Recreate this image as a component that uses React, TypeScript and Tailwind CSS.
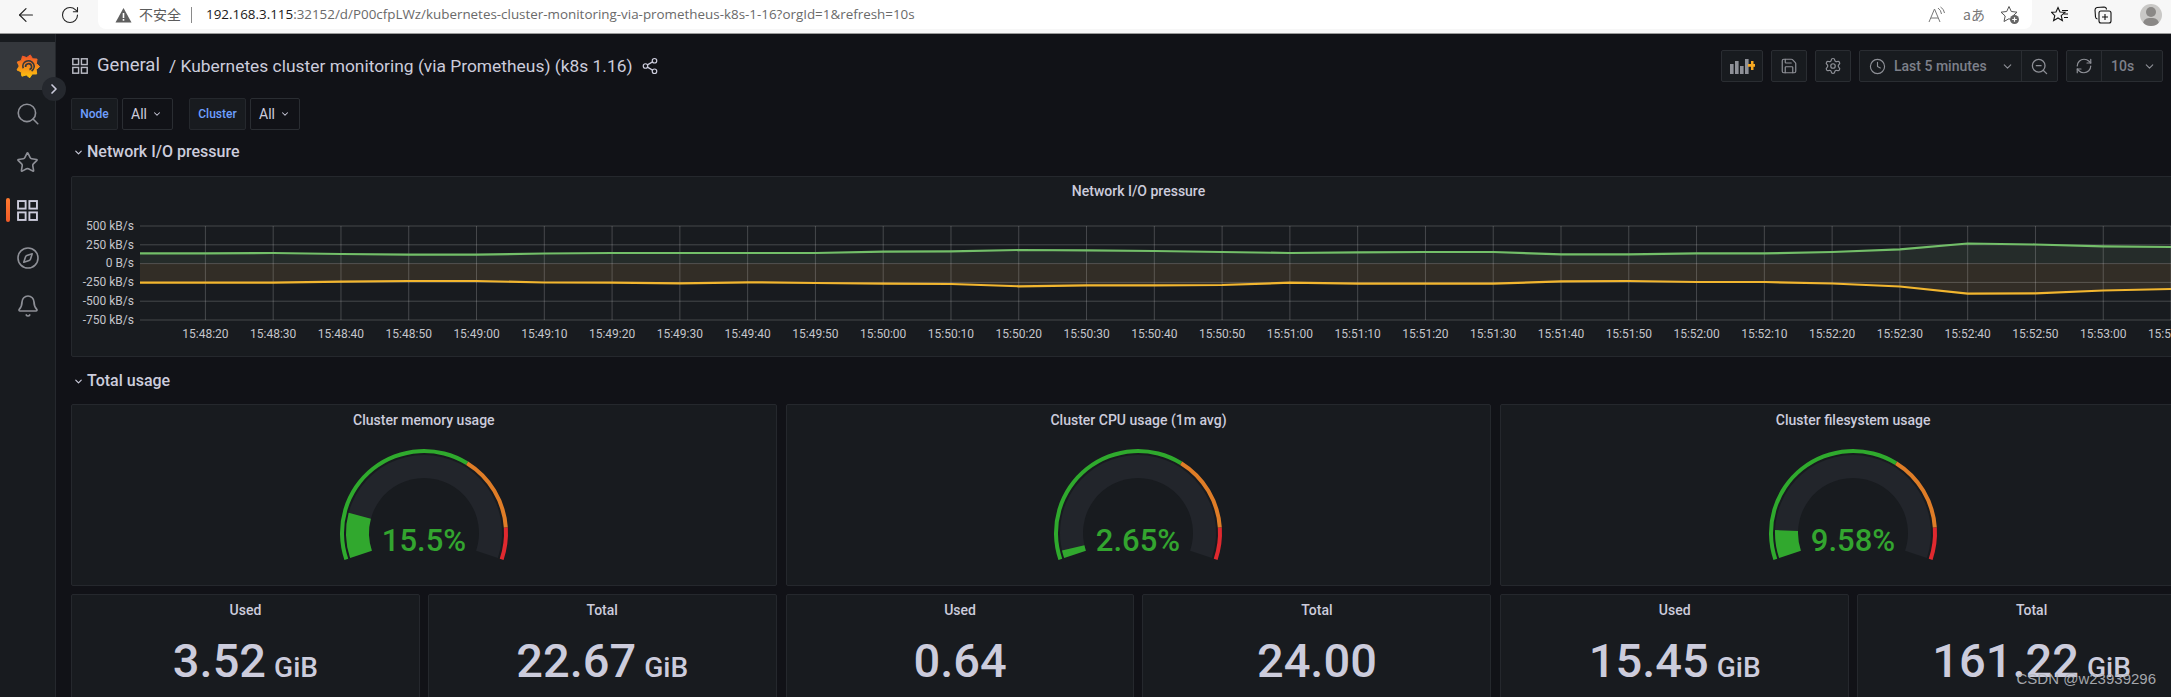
import React from "react";
import { ArrowLeft, RotateCw, Search, Star, Compass, Bell, Share2, ChevronDown, ChevronRight, Save, Settings, Clock, ZoomOut, RefreshCw } from "lucide-react";

const greenPts = [253.3, 253, 254, 254.7, 254.7, 253.5, 253, 253, 253, 253, 251.7, 251.3, 250, 250.3, 251, 252, 253, 252.3, 252, 252, 254.3, 254.3, 253.3, 253.4, 252, 249.3, 243.5, 244.5, 246.3, 247];
const yellowPts = [282.7, 282.7, 281.7, 281, 281, 282.5, 282.7, 283.3, 282.3, 283, 283.7, 284, 286.3, 285.3, 285.3, 285, 282.7, 283.7, 283.7, 283.7, 281.3, 281, 282, 282, 283.5, 286.5, 293.7, 293.3, 290.5, 289];
const tx = (i: number) => 204.4 + 67.78 * i;
const pad = (n: number) => String(n).padStart(2, "0");
const tickLabel = (i: number) => {
  const s = 15 * 3600 + 48 * 60 + 20 + i * 10;
  return `${pad(Math.floor(s / 3600))}:${pad(Math.floor((s % 3600) / 60))}:${pad(s % 60)}`;
};

function Chart() {
  const gridY = [226, 244.8, 263.6, 282.4, 301.2, 320];
  const labels = ["500 kB/s", "250 kB/s", "0 B/s", "-250 kB/s", "-500 kB/s", "-750 kB/s"];
  const line = (pts: number[]) => `M139 ${pts[0]} ` + pts.map((y, i) => `L${tx(i)} ${y}`).join(" ");
  const end = tx(29);
  return (
    <svg width="2135" height="150" viewBox="71 206 2135 150" className="block">
      <path d={`${line(greenPts)} L${end} 263.6 L139 263.6 Z`} fill="#252c2a" />
      <path d={`${line(yellowPts)} L${end} 263.6 L139 263.6 Z`} fill="#322d26" />
      {gridY.map((y) => (
        <line key={y} x1="139" x2="2206" y1={y} y2={y} stroke="#ffffff" strokeOpacity="0.2" />
      ))}
      {Array.from({ length: 30 }, (_, i) => (
        <line key={i} x1={tx(i)} x2={tx(i)} y1="226" y2="320" stroke="#ffffff" strokeOpacity="0.2" />
      ))}
      <path d={line(greenPts)} fill="none" stroke="#73bf69" strokeWidth="2.2" />
      <path d={line(yellowPts)} fill="none" stroke="#f2b62f" strokeWidth="2.2" />
      {labels.map((l, i) => (
        <text key={l} x="133" y={gridY[i] + 3.8} textAnchor="end" fontSize="12" fill="#c4c5cb">{l}</text>
      ))}
      {Array.from({ length: 30 }, (_, i) => (
        <text key={i} x={tx(i)} y="337.5" textAnchor="middle" fontSize="12" fill="#c4c5cb">{tickLabel(i)}</text>
      ))}
    </svg>
  );
}

const SWEEP = 217.4;
const START = 180 - 18.7;
function arc(cx: number, cy: number, r0: number, r1: number, p0: number, p1: number) {
  const a0 = ((START + p0 * SWEEP) * Math.PI) / 180;
  const a1 = ((START + p1 * SWEEP) * Math.PI) / 180;
  const pt = (r: number, a: number) => `${cx + r * Math.cos(a)} ${cy + r * Math.sin(a)}`;
  const large = (p1 - p0) * SWEEP > 180 ? 1 : 0;
  return `M${pt(r1, a0)} A${r1} ${r1} 0 ${large} 1 ${pt(r1, a1)} L${pt(r0, a1)} A${r0} ${r0} 0 ${large} 0 ${pt(r0, a0)} Z`;
}

function Gauge({ value, text }: { value: number; text: string }) {
  const cx = 95, cy = 90;
  return (
    <svg width="190" height="125" viewBox="0 0 190 125" className="block mt-[8px]">
      <path d={arc(cx, cy, 80, 84, 0, 0.646)} fill="#2faa2d" />
      <path d={arc(cx, cy, 80, 84, 0.646, 0.897)} fill="#df7d27" />
      <path d={arc(cx, cy, 80, 84, 0.897, 1)} fill="#e0292f" />
      <path d={arc(cx, cy, 55, 78, 0, 1)} fill="#22252b" />
      <path d={arc(cx, cy, 55, 78, 0, value)} fill="#31a82e" />
      <text x={cx} y={cy + 17.5} textAnchor="middle" fontSize="31" fontWeight="500" fill="#33a52f">{text}</text>
    </svg>
  );
}

const panel = "bg-[#181b1f] border border-[#25282d] rounded-[2px]";

function GaugePanel({ title, value, text }: { title: string; value: number; text: string }) {
  return (
    <div className={`${panel} h-[182px] flex flex-col items-center`}>
      <div className="h-[30px] leading-[30px] text-[14px] font-medium text-[#ccccdc]">{title}</div>
      <Gauge value={value} text={text} />
    </div>
  );
}

function Stat({ title, value, unit }: { title: string; value: string; unit?: string }) {
  return (
    <div className={`${panel} h-[140px] flex flex-col items-center`}>
      <div className="h-[30px] leading-[30px] text-[14px] font-medium text-[#ccccdc]">{title}</div>
      <div className="flex items-baseline mt-[9px] font-medium text-[#ccccdc]">
        <span className="text-[47px] leading-[54px]">{value}</span>
        {unit && <span className="text-[28px] ml-[8px]">{unit}</span>}
      </div>
    </div>
  );
}

function Apps({ className, color }: { className?: string; color: string }) {
  return (
    <svg viewBox="0 0 20 20" className={className} fill="none" stroke={color} strokeWidth="1.8">
      <rect x="1" y="1" width="7.2" height="7.2" />
      <rect x="11.8" y="1" width="7.2" height="7.2" />
      <rect x="1" y="11.8" width="7.2" height="7.2" />
      <rect x="11.8" y="11.8" width="7.2" height="7.2" />
    </svg>
  );
}

function GrafanaLogo() {
  const teeth = 9;
  const cx = 12, cy = 12.3;
  let d = "";
  for (let i = 0; i < teeth * 2; i++) {
    const a = (i / (teeth * 2)) * Math.PI * 2 - Math.PI / 2 + 0.2;
    const r = i % 2 === 0 ? 11.6 : 8.8;
    d += `${i === 0 ? "M" : "L"}${cx + r * Math.cos(a)} ${cy + r * Math.sin(a)} `;
  }
  return (
    <svg width="24" height="24" viewBox="0 0 24 24">
      <defs>
        <linearGradient id="gl" x1="0" y1="0" x2="0" y2="1">
          <stop offset="0" stopColor="#f0502a" />
          <stop offset="1" stopColor="#fcc50d" />
        </linearGradient>
      </defs>
      <path d={d + "Z"} fill="url(#gl)" stroke="url(#gl)" strokeWidth="1" strokeLinejoin="round" />
      <path d="M7.2 14.2 A5.6 5.6 0 1 1 15.6 17 " fill="none" stroke="#34373c" strokeWidth="1.7" />
      <path d="M9.6 13 A3 3 0 1 1 13.5 15.6 " fill="none" stroke="#34373c" strokeWidth="1.7" />
    </svg>
  );
}

function Sidebar() {
  const rows = [
    <Search key="s" size={26} color="#8e9097" strokeWidth={1.5} />,
    <Star key="st" size={23} color="#8e9097" strokeWidth={1.7} />,
    <Apps key="a" className="w-[21px] h-[21px]" color="#ccccdc" />,
    <Compass key="c" size={24} color="#8e9097" strokeWidth={1.6} />,
    <Bell key="b" size={24} color="#8e9097" strokeWidth={1.7} />,
  ];
  return (
    <aside className="w-[56px] shrink-0 bg-[#181b1f] border-r border-[#25282d] pt-[8px] relative">
      <div className="h-[48px] bg-[#34373c] flex items-center justify-center"><GrafanaLogo /></div>
      {rows.map((r, i) => (
        <div key={i} className="h-[48px] flex items-center justify-center relative">
          {i === 2 && <span className="absolute left-[6px] top-[12px] w-[4px] h-[24px] rounded-[2px] bg-gradient-to-b from-[#ff7a2f] to-[#f05a28]" />}
          {r}
        </div>
      ))}
      <div className="absolute left-[42px] top-[43px] w-[24px] h-[24px] rounded-full bg-[#25282e] flex items-center justify-center">
        <ChevronRight size={16} color="#ccccdc" strokeWidth={2.5} />
      </div>
    </aside>
  );
}

const tb = "h-[32px] bg-[#181b1f] border border-[#2a2d32] rounded-[2px] flex items-center justify-center text-[#8e9097]";

function Toolbar() {
  return (
    <div className="h-[32px] flex items-center">
      <Apps className="w-[16px] h-[16px] ml-[1px] mr-[9px]" color="#b9bac4" />
      <span className="text-[18.5px] text-[#ccccdc]">General</span>
      <span className="text-[17.4px] text-[#ccccdc] ml-[9px]">/ Kubernetes cluster monitoring (via Prometheus) (k8s 1.16)</span>
      <Share2 size={18} color="#ccccdc" className="ml-[8px]" strokeWidth={1.6} />
      <div className="ml-auto flex items-center gap-[8px] mr-[8px]">
        <div className={`${tb} w-[42px]`}>
          <svg width="26" height="16" viewBox="0 0 26 16">
            <rect x="1" y="6" width="3.6" height="10" fill="#8e9097" />
            <rect x="6" y="3" width="3.6" height="13" fill="#8e9097" />
            <rect x="11" y="8" width="3.6" height="8" fill="#8e9097" />
            <rect x="16" y="1" width="3.6" height="15" fill="#8e9097" />
            <path d="M19 6h3V3h2.5v3H26v2.8h-1.5V12H22V8.8h-3z" fill="#f6a821" />
          </svg>
        </div>
        <div className={`${tb} w-[36px]`}><Save size={18} strokeWidth={1.6} /></div>
        <div className={`${tb} w-[36px]`}><Settings size={18} strokeWidth={1.6} /></div>
        <div className={`${tb} w-[199px] !justify-start`}>
          <div className="w-[162px] flex items-center pl-[9px] border-r border-[#2a2d32] h-full">
            <Clock size={17} strokeWidth={1.6} />
            <span className="ml-[8px] text-[14px] font-medium text-[#7d808a]">Last 5 minutes</span>
            <ChevronDown size={13} className="ml-[14px]" strokeWidth={2} />
          </div>
          <div className="flex-1 flex items-center justify-center"><ZoomOut size={19} strokeWidth={1.6} /></div>
        </div>
        <div className={`${tb} w-[97px] !justify-start`}>
          <div className="w-[35px] flex items-center justify-center border-r border-[#2a2d32] h-full"><RefreshCw size={18} strokeWidth={1.6} /></div>
          <span className="ml-[9px] text-[14px] font-medium text-[#7d808a]">10s</span>
          <ChevronDown size={13} className="ml-[9px]" strokeWidth={2} />
        </div>
      </div>
    </div>
  );
}

function Variable({ label, w, vw }: { label: string; w: string; vw: string }) {
  return (
    <div className="flex items-center gap-[4px]">
      <div className={`${w} h-[32px] bg-[#181b1f] border border-[#25282d] rounded-[2px] flex items-center justify-center text-[12px] font-medium text-[#6e9fff]`}>{label}</div>
      <div className={`${vw} h-[32px] border border-[#2a2d32] rounded-[2px] flex items-center pl-[8px] text-[14px] text-[#ccccdc]`}>
        All<ChevronDown size={10} className="ml-[5px]" strokeWidth={2.5} />
      </div>
    </div>
  );
}

function Section({ title }: { title: string }) {
  return (
    <div className="h-[24px] flex items-center text-[16px] font-medium text-[#ccccdc]">
      <ChevronDown size={11} className="ml-[2px] mr-[3px]" strokeWidth={2.5} />
      {title}
    </div>
  );
}

function BrowserBar() {
  return (
    <div className="h-[34px] shrink-0 bg-[#f7f7f7] border-b border-[#9a9a9a] flex items-start">
      <div className="w-[98px] h-[29px] shrink-0 flex items-center">
        <ArrowLeft size={22} color="#222" strokeWidth={1.3} className="ml-[15px]" />
        <RotateCw size={20} color="#222" strokeWidth={1.3} className="ml-[23px]" />
      </div>
      <div className="w-[1934px] h-[29px] bg-white rounded-b-[8px] flex items-center [font-family:'Open_Sans','Noto_Sans_CJK_SC',sans-serif] text-[13.4px]">
        <svg width="17" height="16" viewBox="0 0 17 16" className="ml-[17px]">
          <path d="M8.5 1 L16.5 15.5 H.5Z" fill="#5f5f5f" />
          <rect x="7.7" y="6" width="1.6" height="5" fill="#fff" />
          <rect x="7.7" y="12" width="1.6" height="1.7" fill="#fff" />
        </svg>
        <span className="ml-[7px] text-[#5c5c5c] text-[14px] [font-family:'Noto_Sans_CJK_SC',sans-serif]">不安全</span>
        <span className="ml-[10px] w-px h-[16px] bg-[#8a8a8a]" />
        <span className="ml-[14px] text-[#1a1a1a]">192.168.3.115</span>
        <span className="text-[#6a6a6a]">:32152/d/P00cfpLWz/kubernetes-cluster-monitoring-via-prometheus-k8s-1-16?orgId=1&amp;refresh=10s</span>
        <div className="ml-auto mr-[12px] flex items-center">
          <svg width="18" height="18" viewBox="0 0 18 18" fill="none" stroke="#777" strokeWidth="1">
            <path d="M1 16 L6.5 3 L12 16 M3 12 H10" />
            <path d="M10 2 Q13 4 13.5 8 M12.5 1 Q16 3 16.5 7" />
          </svg>
          <span className="ml-[17px] mr-[5px] text-[#777] text-[14px] [font-family:'Noto_Sans_CJK_JP',sans-serif]">aあ</span>
          <svg width="20" height="20" viewBox="0 0 20 20" fill="none" className="ml-[10px]">
            <path d="M9 1.5 L11.3 6.5 L17 7.2 L12.8 11 L14 16.5 L9 13.7 L4 16.5 L5.2 11 L1 7.2 L6.7 6.5Z" stroke="#555" strokeWidth="1" />
            <circle cx="14.5" cy="14.5" r="4.5" fill="#666" />
            <path d="M14.5 12.2 V16.8 M12.2 14.5 H16.8" stroke="#fff" strokeWidth="1.2" />
          </svg>
        </div>
      </div>
      <div className="flex-1 h-[29px] flex items-center">
        <svg width="18" height="18" viewBox="0 0 18 18" fill="none" stroke="#111" strokeWidth="1.1" className="ml-[19px]">
          <path d="M7 1.5 L9 6 L14 6.3 L10.2 9.6 L11.4 14.6 L7 12 L2.6 14.6 L3.8 9.6 L0.6 6.3 L5 6Z" />
          <path d="M11 4.5 H17 M12.5 8 H17 M13 11.5 H17" />
        </svg>
        <svg width="18" height="18" viewBox="0 0 18 18" fill="none" stroke="#111" strokeWidth="1.1" className="ml-[25px]">
          <rect x="5" y="5" width="12" height="12" rx="2" />
          <path d="M11 8 V14 M8 11 H14" />
          <path d="M3.5 13 A2.5 2.5 0 0 1 1.5 11 L1 4 A2.5 2.5 0 0 1 3 1.5 L10 1 A2.5 2.5 0 0 1 12.5 3.5" />
        </svg>
        <div className="ml-[28px] w-[22px] h-[22px] rounded-full bg-[#c9c8c6] overflow-hidden relative">
          <span className="absolute left-[6px] top-[3px] w-[10px] h-[10px] rounded-full bg-[#8a8886]" />
          <span className="absolute left-[3px] top-[14px] w-[16px] h-[12px] rounded-full bg-[#8a8886]" />
        </div>
      </div>
    </div>
  );
}

export default function App() {
  return (
    <div className="w-[2171px] h-[697px] overflow-hidden flex flex-col bg-[#111217] relative [font-family:Roboto,sans-serif]">
      <BrowserBar />
      <div className="flex-1 flex min-h-0">
        <Sidebar />
        <main className="flex-1 min-w-0 pl-[15px] pt-[16px]">
          <Toolbar />
          <div className="flex gap-[16px] mt-[16px]">
            <Variable label="Node" w="w-[47px]" vw="w-[51px]" />
            <Variable label="Cluster" w="w-[57px]" vw="w-[50px]" />
          </div>
          <div className="w-[2135px]">
            <div className="mt-[10px]"><Section title="Network I/O pressure" /></div>
            <div className={`${panel} mt-[12px] h-[181px]`}>
              <div className="h-[29px] leading-[29px] text-center text-[14px] font-medium text-[#ccccdc]">Network I/O pressure</div>
              <Chart />
            </div>
            <div className="mt-[12px]"><Section title="Total usage" /></div>
            <div className="grid grid-cols-3 gap-x-[9px] gap-y-[8px] mt-[11px]">
              <GaugePanel title="Cluster memory usage" value={0.155} text="15.5%" />
              <GaugePanel title="Cluster CPU usage (1m avg)" value={0.0265} text="2.65%" />
              <GaugePanel title="Cluster filesystem usage" value={0.0958} text="9.58%" />
              <div className="grid grid-cols-2 gap-[8px]"><Stat title="Used" value="3.52" unit="GiB" /><Stat title="Total" value="22.67" unit="GiB" /></div>
              <div className="grid grid-cols-2 gap-[8px]"><Stat title="Used" value="0.64" /><Stat title="Total" value="24.00" /></div>
              <div className="grid grid-cols-2 gap-[8px]"><Stat title="Used" value="15.45" unit="GiB" /><Stat title="Total" value="161.22" unit="GiB" /></div>
            </div>
          </div>
        </main>
      </div>
      <div className="absolute right-[15px] bottom-[7px] text-[15px] text-[#b4b6bb] opacity-90 [font-family:'Liberation_Sans',sans-serif]">CSDN @w23939296</div>
    </div>
  );
}
